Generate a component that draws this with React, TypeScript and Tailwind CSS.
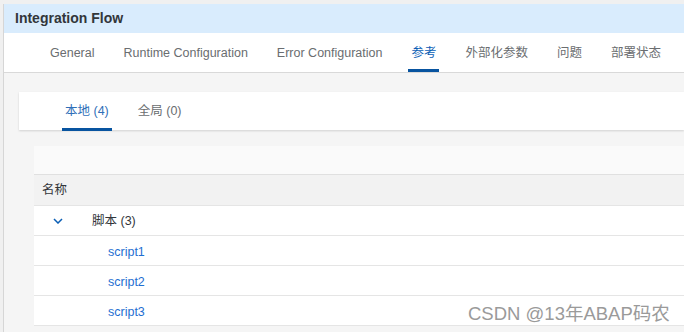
import React from 'react'

const font = { fontFamily: '"Liberation Sans", "Noto Sans CJK SC", sans-serif' }

const topTabs = ['General', 'Runtime Configuration', 'Error Configuration', '参考', '外部化参数', '问题', '部署状态']
const scripts = ['script1', 'script2', 'script3']

const App = () => {
  return (
    <div className="relative w-[684px] h-[332px] overflow-hidden bg-[#f0f0f0] pt-[4px] text-[12.5px] text-[#32363a]" style={font}>
      <div className="ml-[3px] h-full border-l border-[#d6d6d6] bg-[#f5f5f5] flex flex-col">
        <div className="h-[29px] bg-[#d9ecfd] flex items-center pl-[11px] font-bold text-[14px] text-[#32363a] shrink-0">
          Integration Flow
        </div>
        <div className="h-[40px] bg-white border-b border-[#d9d9d9] flex items-stretch pl-[46px] gap-[29px] shrink-0">
          {topTabs.map((t, i) => (
            <div key={t} className={`relative flex items-center pt-[1px] ${i === 3 ? 'text-[#0a5eb5]' : 'text-[#6a6d70]'}`}>
              {t}
              {i === 3 && <span className="absolute -left-[3px] -right-[3px] bottom-0 h-[3px] bg-[#0854a0]" />}
            </div>
          ))}
        </div>
        <div className="pl-[15px] pt-[19px] flex flex-col">
          <div className="h-[38px] bg-white shadow-[0_1px_2px_rgba(0,0,0,0.15)] flex items-stretch pl-[46px] gap-[29px]">
            <div className="relative flex items-center text-[#2f6fb8]">
              本地 (4)
              <span className="absolute -left-[3px] -right-[3px] -bottom-[1px] h-[3px] bg-[#0854a0]" />
            </div>
            <div className="flex items-center text-[#6a6d70]">全局 (0)</div>
          </div>
          <div className="ml-[15px] mt-[16px] flex flex-col">
            <div className="h-[29px] bg-[#fafafa] border-b border-[#e0e0e0]" />
            <div className="h-[31px] bg-[#f2f2f2] border-b border-[#e5e5e5] flex items-center pl-[8px] text-[#32363a]">名称</div>
            <div className="h-[30px] bg-white border-b border-[#e5e5e5] flex items-center pt-[1px]">
              <svg width="10" height="6" viewBox="0 0 10 6" className="ml-[19px]">
                <path d="M1 1 L5 5 L9 1" fill="none" stroke="#0a5eb5" strokeWidth="1.5" />
              </svg>
              <span className="ml-[29px] text-[#32363a]">脚本 (3)</span>
            </div>
            {scripts.map(s => (
              <div key={s} className="h-[30px] bg-white border-b border-[#e5e5e5] flex items-center pt-[3px] pl-[74px] text-[#1f6fd1]">
                {s}
              </div>
            ))}
          </div>
        </div>
      </div>
      <div className="absolute left-[468px] top-[300px] text-[18.5px] text-[#9a9a9a] whitespace-nowrap">CSDN @13年ABAP码农</div>
    </div>
  )
}

export default App
